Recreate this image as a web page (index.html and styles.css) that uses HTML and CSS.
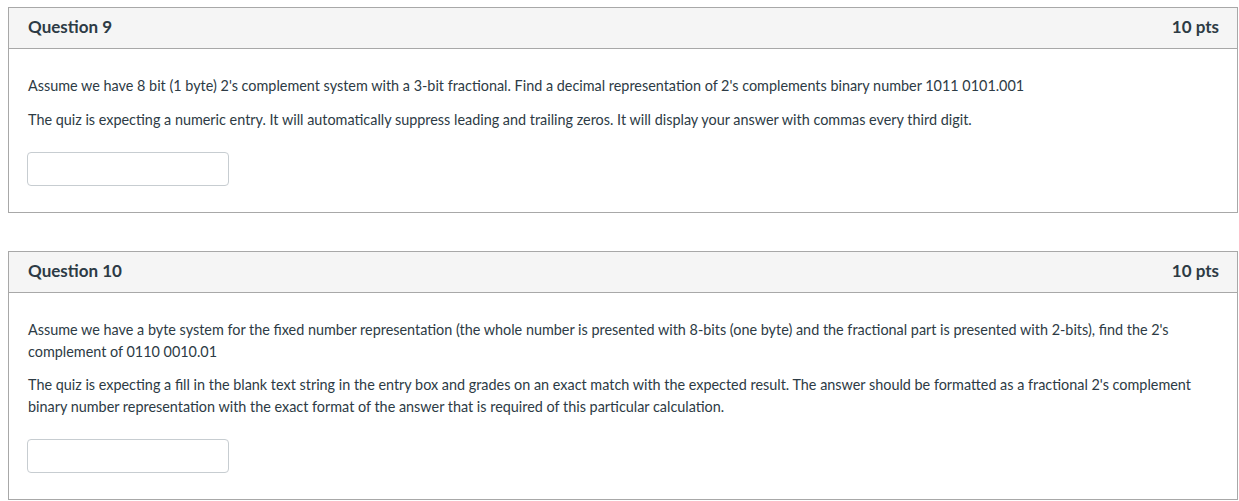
FILE: index.html
```html
<!DOCTYPE html>
<html>
<head>
<meta charset="utf-8">
<link rel="stylesheet" href="styles.css">
</head>
<body>
<div class="quiz">
  <div class="card">
    <div class="card-header">
      <span class="title">Question 9</span>
      <span class="pts">10 pts</span>
    </div>
    <div class="card-body">
      <p>Assume we have 8 bit (1 byte) 2's complement system with a 3-bit fractional. Find a decimal representation of 2's complements binary number 1011 0101.001</p>
      <p>The quiz is expecting a numeric entry. It will automatically suppress leading and trailing zeros. It will display your answer with commas every third digit.</p>
      <input class="answer" type="text">
    </div>
  </div>
  <div class="card">
    <div class="card-header">
      <span class="title">Question 10</span>
      <span class="pts">10 pts</span>
    </div>
    <div class="card-body">
      <p>Assume we have a byte system for the fixed number representation (the whole number is presented with 8-bits (one byte) and the fractional part is presented with 2-bits), find the 2's complement of 0110 0010.01</p>
      <p>The quiz is expecting a fill in the blank text string in the entry box and grades on an exact match with the expected result. The answer should be formatted as a fractional 2's complement binary number representation with the exact format of the answer that is required of this particular calculation.</p>
      <input class="answer" type="text">
    </div>
  </div>
</div>
</body>
</html>
```
FILE: styles.css
```css
html, body {
  margin: 0;
  padding: 0;
  background: #fff;
}
body {
  font-family: Lato, "Open Sans", sans-serif;
  color: #2d3b45;
  overflow: hidden;
}
.quiz {
  display: flex;
  flex-direction: column;
  gap: 38px;
  padding: 7px 0 0 8px;
}
.card {
  width: 1230px;
  box-sizing: border-box;
  border: 1px solid #a8a8a8;
}
.card-header {
  display: flex;
  justify-content: space-between;
  align-items: center;
  height: 40px;
  padding: 0 18px 0 19px;
  background: #f5f5f5;
  border-bottom: 1px solid #a8a8a8;
  font-weight: 700;
  font-size: 17px;
  line-height: 20px;
}
.card-header span {
  position: relative;
  top: -1px;
}
.card-body {
  padding: 14px 18px 26px 19px;
  font-size: 14.4px;
  line-height: 21.5px;
}
.card-body p {
  margin: 12px 0;
}
.answer {
  display: block;
  margin: 22px 0 0 -1px;
  width: 202px;
  height: 34px;
  box-sizing: border-box;
  border: 1px solid #c7cdd1;
  border-radius: 4px;
  background: #fff;
  padding: 0 8px;
}
```
